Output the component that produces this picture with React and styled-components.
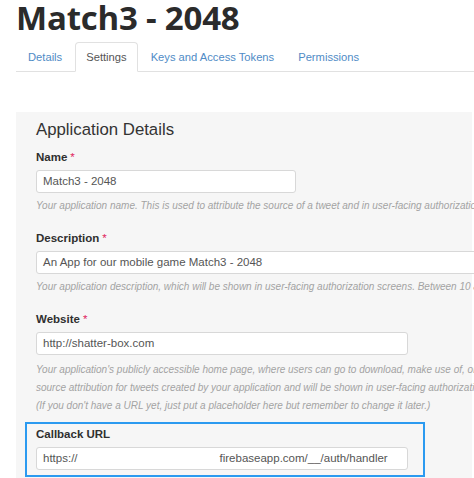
import React from "react";
import styled, { createGlobalStyle } from "styled-components";

const Global = createGlobalStyle`
  html, body { margin: 0; padding: 0; background: #fff; }
  body { font-family: "Liberation Sans", Arial, sans-serif; overflow: hidden; }
`;

const Page = styled.div`
  width: 474px;
  height: 478px;
  overflow: hidden;
  padding-left: 16px;
  box-sizing: border-box;
`;

const Title = styled.h1`
  margin: 0;
  font-family: "Open Sans", sans-serif;
  font-weight: 700;
  font-size: 33px;
  line-height: 36px;
  color: #2b2b2b;
  letter-spacing: -0.2px;
`;

const Tabs = styled.ul`
  list-style: none;
  margin: 6px 0 0;
  padding: 0;
  display: flex;
  border-bottom: 1px solid #e1e1e1;
  height: 29px;
`;

const Tab = styled.li`
  box-sizing: border-box;
  height: 30px;
  padding: 0 10px 0 ${(p) => p.$pl || 10}px;
  margin-right: 2px;
  font-size: 11.2px;
  line-height: 29px;
  color: ${(p) => (p.$active ? "#555" : "#4f8bc6")};
  background: ${(p) => (p.$active ? "#fff" : "transparent")};
  border: 1px solid ${(p) => (p.$active ? "#e1e1e1" : "transparent")};
  border-bottom-color: ${(p) => (p.$active ? "#fff" : "transparent")};
  border-radius: 4px 4px 0 0;
  white-space: nowrap;
`;

const Panel = styled.div`
  margin-top: 40px;
  width: 456px;
  height: 400px;
  background: #f6f6f6;
  padding: 8px 0 0 20px;
  box-sizing: border-box;
`;

const PanelTitle = styled.h2`
  margin: 0 0 10px;
  font-weight: 400;
  font-size: 16.8px;
  line-height: 20px;
  color: #333;
`;

const Group = styled.div`
  margin-bottom: ${(p) => p.$mb ?? 16}px;
`;

const Label = styled.div`
  font-weight: 700;
  font-size: 11.5px;
  line-height: 15px;
  color: #2f2f2f;
  margin-bottom: 5px;
`;

const Req = styled.span`
  color: #e0245e;
  font-weight: 400;
  margin-left: 3px;
`;

const Input = styled.div`
  box-sizing: border-box;
  width: ${(p) => p.$w}px;
  height: 23px;
  background: #fff;
  border: 1px solid #d8d8d8;
  border-radius: 3px;
  padding: 0 6px;
  font-size: 11.5px;
  line-height: 21px;
  color: #555;
  white-space: nowrap;
  display: flex;
`;

const Gap = styled.span`
  display: inline-block;
  flex: none;
  width: ${(p) => p.$w}px;
`;

const Help = styled.div`
  margin-top: ${(p) => p.$mt ?? 4}px;
  font-style: italic;
  font-size: 10px;
  line-height: 18px;
  color: #a3a3a3;
  white-space: nowrap;
`;

const Highlight = styled.div`
  margin-left: -11px;
  width: 400px;
  box-sizing: border-box;
  border: 2px solid #2b9af0;
  padding: 3px 0 5px 9px;
`;

export default function App() {
  return (
    <Page>
      <Global />
      <Title>Match3 - 2048</Title>
      <Tabs>
        <Tab $pl={11}>Details</Tab>
        <Tab $active>Settings</Tab>
        <Tab>Keys and Access Tokens</Tab>
        <Tab>Permissions</Tab>
      </Tabs>
      <Panel>
        <PanelTitle>Application Details</PanelTitle>
        <Group>
          <Label>Name<Req>*</Req></Label>
          <Input $w={260}>Match3 - 2048</Input>
          <Help>Your application name. This is used to attribute the source of a tweet and in user-facing authorization screens.</Help>
        </Group>
        <Group>
          <Label>Description<Req>*</Req></Label>
          <Input $w={460}>An App for our mobile game Match3 - 2048</Input>
          <Help>Your application description, which will be shown in user-facing authorization screens. Between 10 and 200 characters max.</Help>
        </Group>
        <Group $mb={7}>
          <Label>Website<Req>*</Req></Label>
          <Input $w={372}>http://shatter-box.com</Input>
          <Help $mt={6}>
            Your application's publicly accessible home page, where users can go to download, make use of, or find out more information about your application.
            <br />
            source attribution for tweets created by your application and will be shown in user-facing authorization screens.
            <br />
            (If you don't have a URL yet, just put a placeholder here but remember to change it later.)
          </Help>
        </Group>
        <Highlight>
          <Label>Callback URL</Label>
          <Input $w={372}>
            https://<Gap $w={142} />firebaseapp.com/__/auth/handler
          </Input>
        </Highlight>
      </Panel>
    </Page>
  );
}
